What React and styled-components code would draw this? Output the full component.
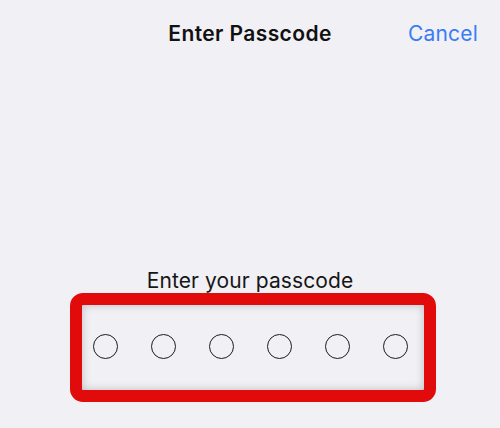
import React from "react";
import styled, { createGlobalStyle } from "styled-components";

const Global = createGlobalStyle`
  body {
    margin: 0;
    background: #f0f0f5;
    font-family: Inter, "Liberation Sans", Arial, sans-serif;
  }
`;

const Page = styled.div`
  width: 500px;
  height: 428px;
  background: #f0f0f5;
  display: flex;
  flex-direction: column;
  overflow: hidden;
`;

const Header = styled.div`
  height: 66px;
  display: grid;
  grid-template-columns: 1fr auto 1fr;
  align-items: center;
  padding: 0 22px;
`;

const Title = styled.div`
  grid-column: 2;
  font-size: 21px;
  font-weight: 600;
  letter-spacing: 0.4px;
  color: #111;
`;

const CancelButton = styled.button`
  grid-column: 3;
  justify-self: end;
  border: none;
  background: none;
  padding: 0;
  font: inherit;
  font-size: 21px;
  letter-spacing: 0.2px;
  color: #3a7cf4;
`;

const Body = styled.div`
  flex: 1;
  display: flex;
  flex-direction: column;
  align-items: center;
  padding-top: 202px;
`;

const Prompt = styled.div`
  font-size: 21px;
  line-height: 25px;
  letter-spacing: 0.1px;
  color: #161616;
`;

const Highlight = styled.div`
  align-self: flex-start;
  margin-left: 70px;
  width: 366px;
  height: 109px;
  box-sizing: border-box;
  border: 12px solid #e10b0b;
  border-radius: 13px;
  box-shadow: inset 0 0 8px rgba(0, 0, 0, 0.22);
  display: flex;
  align-items: center;
  padding: 0 0 2px 11px;
  gap: 33px;
`;

const Dot = styled.span`
  width: 25px;
  height: 25px;
  box-sizing: border-box;
  border: 1.5px solid #1c1c1c;
  border-radius: 50%;
  background: ${(p) => (p.filled ? "#1c1c1c" : "transparent")};
`;

export default function App() {
  const entered = 0;
  return (
    <Page>
      <Global />
      <Header>
        <Title>Enter Passcode</Title>
        <CancelButton>Cancel</CancelButton>
      </Header>
      <Body>
        <Prompt>Enter your passcode</Prompt>
        <Highlight>
          {[0, 1, 2, 3, 4, 5].map((i) => (
            <Dot key={i} filled={i < entered} />
          ))}
        </Highlight>
      </Body>
    </Page>
  );
}
